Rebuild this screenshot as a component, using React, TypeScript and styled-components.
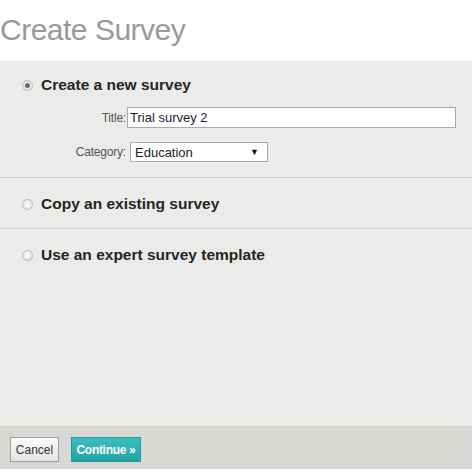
import React from 'react';
import styled, { createGlobalStyle } from 'styled-components';

const GlobalStyle = createGlobalStyle`
  html, body {
    margin: 0;
    padding: 0;
    background: #ffffff;
    font-family: "Liberation Sans", Arial, sans-serif;
  }
`;

interface OptionProps {
  label: string;
  checked?: boolean;
  children?: React.ReactNode;
}

const SurveyOption: React.FC<OptionProps> = ({ label, checked, children }) => {
  return (
    <Section>
      <OptionRow>
        <Radio checked={!!checked} />
        <OptionLabel>{label}</OptionLabel>
      </OptionRow>
      {children}
    </Section>
  );
};

const App: React.FC = () => {
  return (
    <Page>
      <GlobalStyle />
      <Header>
        <PageTitle>Create Survey</PageTitle>
      </Header>
      <Panel>
        <PanelBody>
          <SurveyOption label="Create a new survey" checked>
            <Form>
              <FieldLabel>Title:</FieldLabel>
              <TextInput defaultValue="Trial survey 2" />
              <FieldLabel>Category:</FieldLabel>
              <SelectBox>
                <span>Education</span>
                <Arrow>▼</Arrow>
              </SelectBox>
            </Form>
          </SurveyOption>
          <SurveyOption label="Copy an existing survey" />
          <SurveyOption label="Use an expert survey template" />
        </PanelBody>
        <Footer>
          <CancelButton>Cancel</CancelButton>
          <ContinueButton>Continue »</ContinueButton>
        </Footer>
      </Panel>
    </Page>
  );
};

const Page = styled.div`
  width: 474px;
  height: 471px;
  display: flex;
  flex-direction: column;
`;

const Header = styled.div`
  height: 61px;
  box-sizing: border-box;
  padding-top: 15px;
`;

const PageTitle = styled.h1`
  margin: 0;
  font-size: 30px;
  line-height: 30px;
  font-weight: normal;
  letter-spacing: -0.5px;
  color: #9a9a9a;
`;

const Panel = styled.div`
  flex: 1;
  margin-right: 2px;
  margin-bottom: 2px;
  display: flex;
  flex-direction: column;
  background: #ebebe9;
`;

const PanelBody = styled.div`
  flex: 1;
`;

const Section = styled.div`
  padding: 17px 0 15px;
  border-bottom: 1px solid #d3d3d0;

  &:first-child {
    padding-top: 15px;
  }

  &:last-child {
    border-bottom: none;
  }
`;

const OptionRow = styled.div`
  display: flex;
  align-items: center;
  height: 18px;
  padding-left: 22px;
  gap: 8px;
`;

const Radio = styled.span<{ checked: boolean }>`
  width: 11px;
  height: 11px;
  border-radius: 50%;
  border: 1px solid #b8b8b6;
  background: radial-gradient(circle, #fafafa 0%, #dededc 100%);
  box-sizing: border-box;
  display: flex;
  align-items: center;
  justify-content: center;

  &::after {
    content: '';
    display: ${(p) => (p.checked ? 'block' : 'none')};
    width: 5px;
    height: 5px;
    border-radius: 50%;
    background: #6a6a6a;
  }
`;

const OptionLabel = styled.span`
  font-size: 15.5px;
  font-weight: bold;
  color: #252525;
`;

const Form = styled.div`
  display: grid;
  grid-template-columns: 126px auto;
  row-gap: 14px;
  align-items: center;
  margin-top: 13px;
`;

const FieldLabel = styled.label`
  text-align: right;
  font-size: 12px;
  color: #555555;
  letter-spacing: -0.2px;
`;

const TextInput = styled.input`
  width: 329px;
  height: 21px;
  box-sizing: border-box;
  border: 1px solid #a9a9a9;
  padding: 0 2px;
  margin: 0 0 0 1px;
  font-family: "Liberation Sans", Arial, sans-serif;
  font-size: 13px;
  color: #2a1838;
  background: #ffffff;
  outline: none;
`;

const SelectBox = styled.div`
  width: 138px;
  height: 20px;
  box-sizing: border-box;
  margin-left: 4px;
  border: 1px solid #a9a9a9;
  background: #ffffff;
  display: flex;
  align-items: center;
  justify-content: space-between;
  padding: 0 8px 0 4px;
  font-size: 13px;
  color: #222222;
`;

const Arrow = styled.span`
  font-size: 9px;
  color: #111111;
`;

const Footer = styled.div`
  height: 43px;
  box-sizing: border-box;
  background: #d8d8d4;
  border-top: 1px solid #d0d0cc;
  display: flex;
  align-items: flex-start;
  padding: 10px 0 0 10px;
  gap: 12px;
`;

const CancelButton = styled.button`
  height: 25px;
  width: 49px;
  padding: 0;
  border: 1px solid #9d9d9d;
  background: linear-gradient(#fbfbfb, #e4e4e4);
  font-family: "Liberation Sans", Arial, sans-serif;
  font-size: 12px;
  color: #333333;
`;

const ContinueButton = styled.button`
  height: 25px;
  width: 70px;
  padding: 0;
  border: 1px solid #1f9c9c;
  background: linear-gradient(#3dbfbf, #22a4a4);
  font-family: "Liberation Sans", Arial, sans-serif;
  font-size: 12px;
  font-weight: bold;
  letter-spacing: -0.3px;
  color: #ffffff;
`;

export default App;
